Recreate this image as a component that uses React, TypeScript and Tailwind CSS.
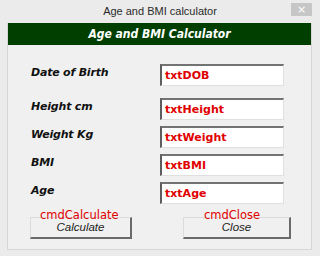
const tahoma = "font-['DejaVu_Sans',Verdana,sans-serif]";

export default function App() {
  return (
    <div className="w-[320px] h-[256px] bg-[#ebebeb] relative overflow-hidden">
      {/* title bar */}
      <div className="h-[23px] relative flex items-center justify-center">
        <span className="text-[11px] text-[#2a2a2a] font-['Liberation_Sans',Arial,sans-serif] leading-none">
          Age and BMI calculator
        </span>
        <div className="absolute right-[8px] top-[3px] w-[21px] h-[13px] bg-[#c6c6c6] flex items-center justify-center text-white text-[11px] leading-none font-['DejaVu_Sans',sans-serif]">
          ×
        </div>
      </div>

      {/* client area */}
      <div className="mx-[7px] w-[305px] h-[227px] bg-[#f0f0f0] border-x border-b border-[#d6d6d6]">
        <div className="h-[22px] bg-[#003f00] flex items-center justify-center">
          <span className={`${tahoma} font-stretch-condensed text-[12px] font-bold italic text-white leading-none`}>
            Age and BMI Calculator
          </span>
        </div>

        <div className="pt-[19px] flex flex-col">
          <Row label="Date of Birth" value="txtDOB" />
          <Row label="Height cm" value="txtHeight" className="mt-[12px]" />
          <Row label="Weight Kg" value="txtWeight" className="mt-[6px]" />
          <Row label="BMI" value="txtBMI" className="mt-[6px]" />
          <Row label="Age" value="txtAge" className="mt-[6px]" />
        </div>

        <div className="flex pl-[22px] mt-[13px]">
          <Button caption="Calculate" name="cmdCalculate" width="w-[102px]" nameLeft="left-[9px]" />
          <Button caption="Close" name="cmdClose" width="w-[108px] ml-[51px]" nameLeft="left-[20px]" />
        </div>
      </div>
    </div>
  );
}

function Row({ label, value, className }: { label: string; value: string; className?: string }) {
  return (
    <div className={`flex items-center pl-[23px] ${className ?? ""}`}>
      <div className={`w-[129px] mb-[6px] ${tahoma} text-[11px] font-bold italic text-[#111] leading-[13px] tracking-[-0.2px]`}>
        {label}
      </div>
      <div className="w-[124px] h-[22px] bg-white border-t-2 border-l-2 border-t-[#737373] border-l-[#5e5e5e] border-b border-r border-b-[#e0e0e0] border-r-[#e0e0e0] flex items-center pl-[3px]">
        <span className={`${tahoma} text-[11px] font-bold text-[#e00000] leading-none`}>{value}</span>
      </div>
    </div>
  );
}

function Button({ caption, name, width, nameLeft }: { caption: string; name: string; width: string; nameLeft: string }) {
  return (
    <div className={`relative h-[22px] ${width} bg-[#f0f0f0] border-t border-l border-[#dcdcdc] border-b-2 border-r-2 border-b-[#6a6a6a] border-r-[#6a6a6a] flex items-center justify-center`}>
      <span className="font-['Liberation_Sans',Arial,sans-serif] text-[11.5px] italic text-[#222] leading-none">{caption}</span>
      <span className={`absolute -top-[8px] ${nameLeft} ${tahoma} text-[11.5px] text-[#e00000] leading-none`}>
        {name}
      </span>
    </div>
  );
}
